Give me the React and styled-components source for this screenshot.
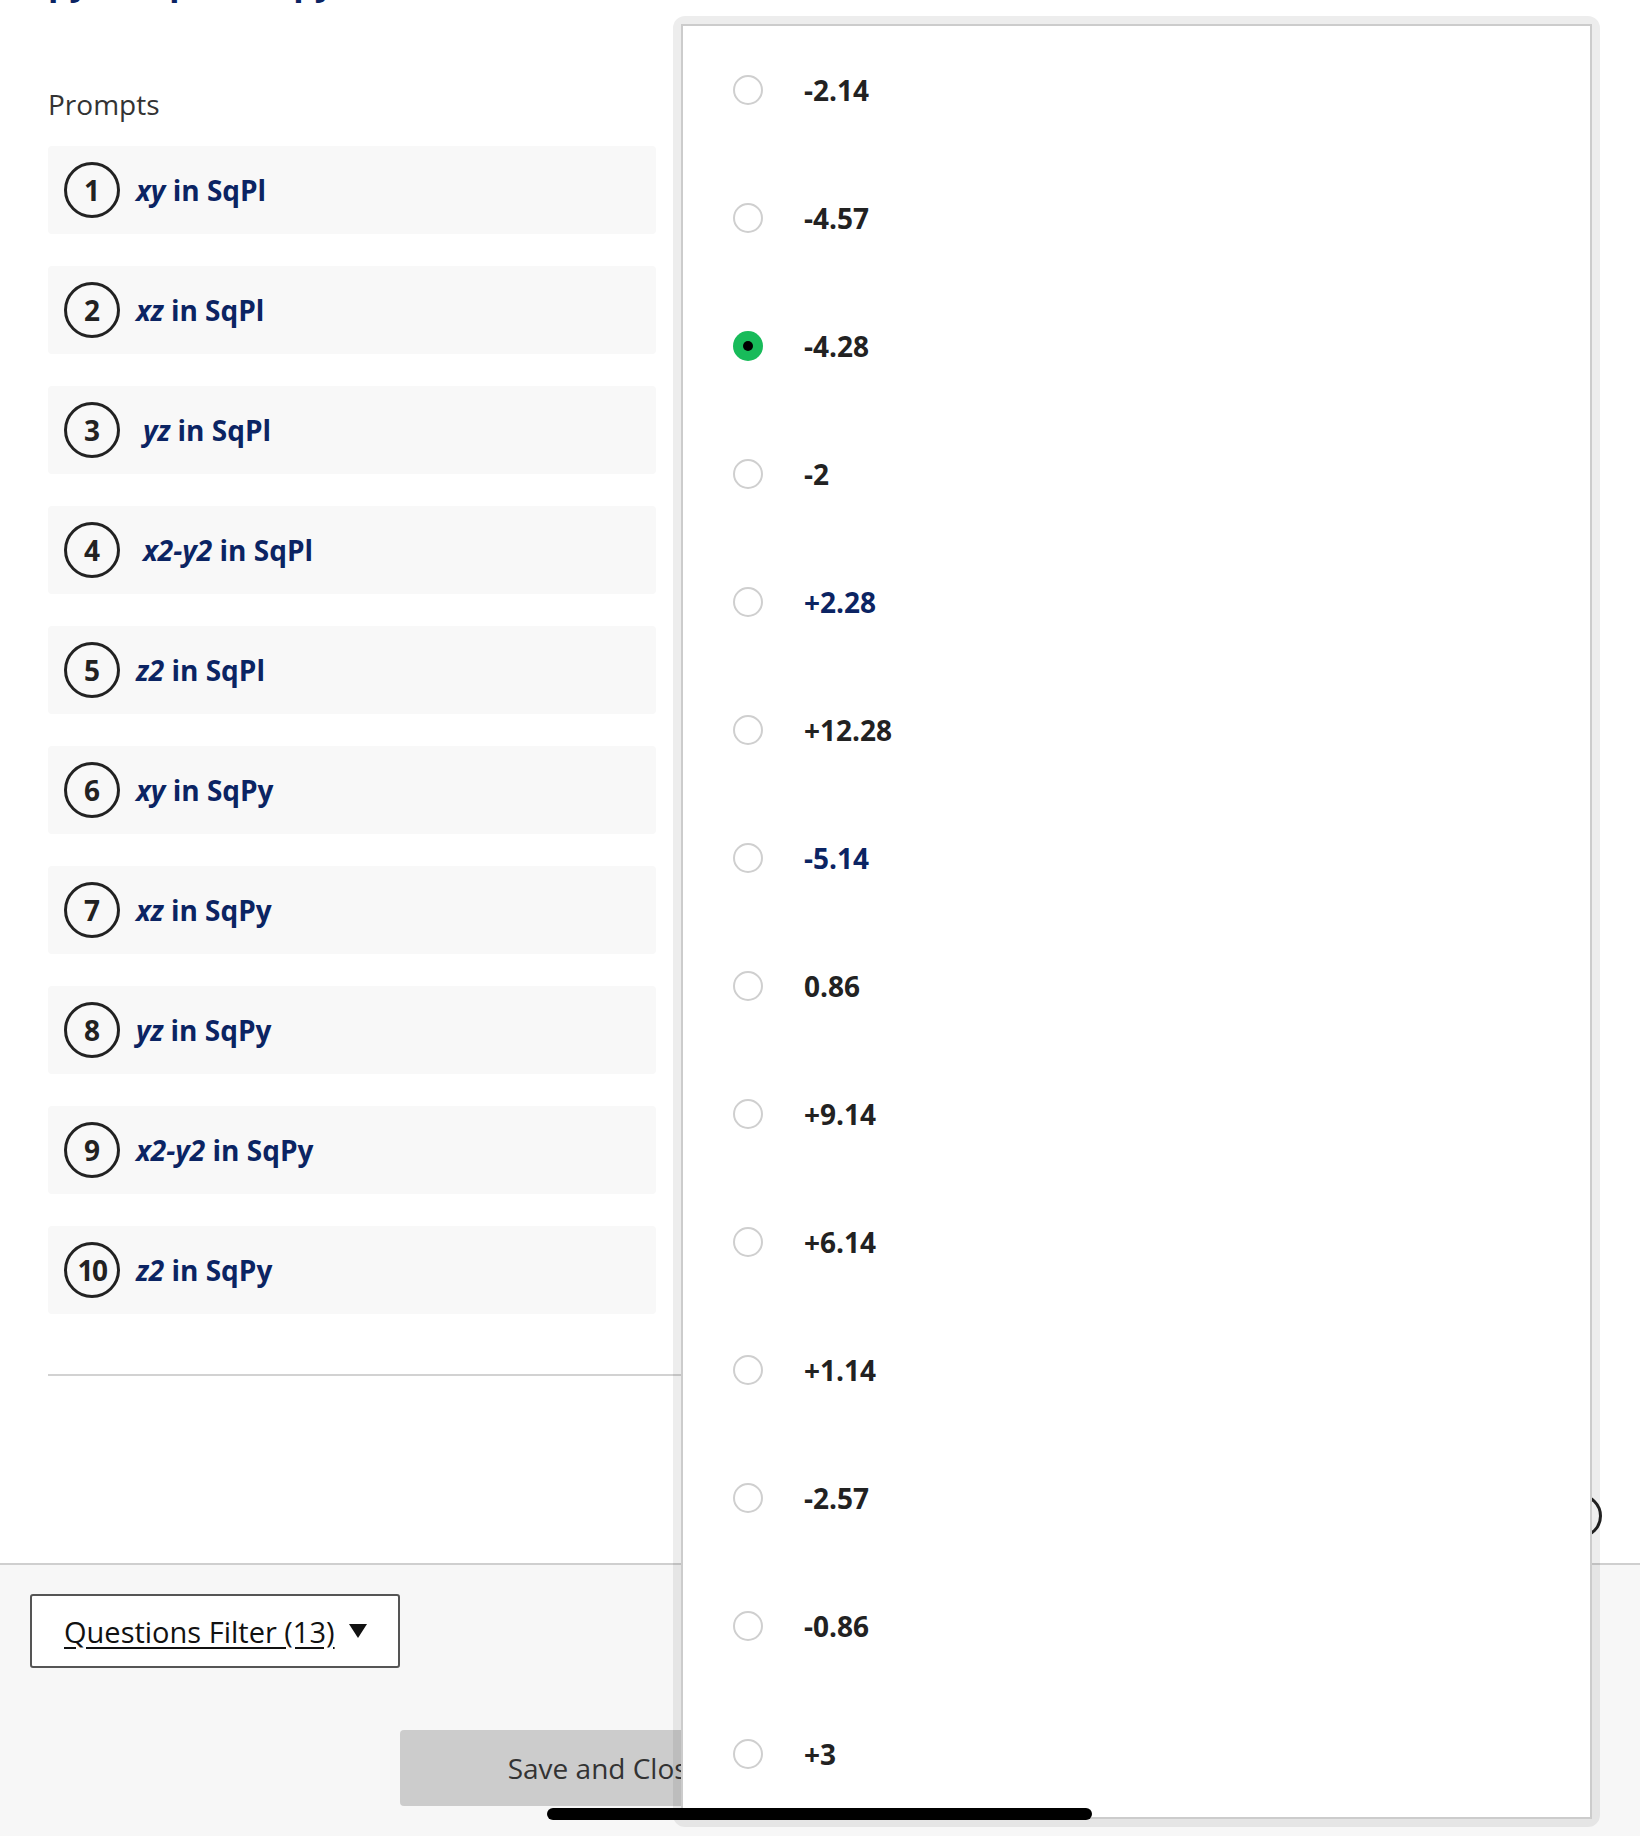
import React from 'react';
import styled, { createGlobalStyle } from 'styled-components';

const GlobalStyle = createGlobalStyle`
  html, body {
    margin: 0;
    padding: 0;
    background: #fff;
    font-family: "Open Sans", "Liberation Sans", sans-serif;
  }
`;

const NAVY = '#0b2463';

const prompts = [
  { n: 1, v: 'xy', rest: ' in SqPl' },
  { n: 2, v: 'xz', rest: ' in SqPl' },
  { n: 3, v: 'yz', rest: ' in SqPl', indent: true },
  { n: 4, v: 'x2-y2', rest: ' in SqPl', indent: true },
  { n: 5, v: 'z2', rest: ' in SqPl' },
  { n: 6, v: 'xy', rest: ' in SqPy' },
  { n: 7, v: 'xz', rest: ' in SqPy' },
  { n: 8, v: 'yz', rest: ' in SqPy' },
  { n: 9, v: 'x2-y2', rest: ' in SqPy' },
  { n: 10, v: 'z2', rest: ' in SqPy' },
];

const options = [
  { label: '-2.14' },
  { label: '-4.57' },
  { label: '-4.28', checked: true },
  { label: '-2' },
  { label: '+2.28', navy: true },
  { label: '+12.28' },
  { label: '-5.14', navy: true },
  { label: '0.86' },
  { label: '+9.14' },
  { label: '+6.14' },
  { label: '+1.14' },
  { label: '-2.57' },
  { label: '-0.86' },
  { label: '+3' },
];

const Page = styled.div`
  position: relative;
  width: 1640px;
  height: 1836px;
  overflow: hidden;
  display: flex;
  flex-direction: column;
  background: #fff;
`;

const Main = styled.main`
  flex: 0 0 1563px;
  box-sizing: border-box;
  padding-left: 48px;
  display: flex;
  flex-direction: column;
`;

// title of the question above, scrolled almost out of view
const CutTitle = styled.h2`
  margin: -40px 0 0;
  font-size: 34px;
  line-height: 44px;
  font-weight: 700;
  color: ${NAVY};
  white-space: nowrap;
`;

const SectionLabel = styled.div`
  margin-top: 82px;
  font-size: 28px;
  line-height: 36px;
  color: #333;
`;

const PromptList = styled.ul`
  list-style: none;
  margin: 24px 0 0;
  padding: 0;
  width: 608px;
  display: flex;
  flex-direction: column;
  gap: 32px;
`;

const PromptRow = styled.li`
  height: 88px;
  box-sizing: border-box;
  padding-left: 16px;
  background: #f8f8f8;
  border-radius: 4px;
  display: flex;
  align-items: center;
  gap: 16px;
`;

const NumberBadge = styled.span`
  width: 56px;
  height: 56px;
  box-sizing: border-box;
  border: 3.5px solid #222;
  border-radius: 50%;
  display: flex;
  align-items: center;
  justify-content: center;
  font-size: 28px;
  font-weight: 700;
  color: #222;
  letter-spacing: ${(p) => (p.wide ? '-1.5px' : '0')};
`;

const PromptText = styled.span`
  margin-left: ${(p) => (p.indent ? '7px' : '0')};
  font-size: 28px;
  font-weight: 700;
  color: ${NAVY};
  white-space: pre;
  em {
    font-style: italic;
  }
`;

const Divider = styled.hr`
  margin: 60px 0 0;
  width: 1544px;
  height: 2px;
  border: 0;
  background: #d2d2d2;
`;

const HelpRow = styled.div`
  margin-top: 118px;
  display: flex;
  justify-content: flex-end;
  padding-right: 38px;
`;

const HelpCircle = styled.span`
  width: 44px;
  height: 44px;
  box-sizing: border-box;
  border: 3px solid #222;
  border-radius: 50%;
`;

const Footer = styled.footer`
  flex: 1;
  background: #f7f7f7;
  border-top: 2px solid #cfcfcf;
  box-sizing: border-box;
  padding: 29px 30px 0;
  display: flex;
  flex-direction: column;
  align-items: flex-start;
`;

const FilterButton = styled.button`
  width: 370px;
  height: 74px;
  box-sizing: border-box;
  border: 2px solid #555;
  border-radius: 3px;
  background: #fff;
  padding: 0 0 0 32px;
  display: flex;
  align-items: center;
  gap: 14px;
  font-family: inherit;
  font-size: 29px;
  color: #111;
  span {
    text-decoration: underline;
    text-underline-offset: 4px;
  }
`;

const Caret = styled.i`
  width: 0;
  height: 0;
  border-left: 9px solid transparent;
  border-right: 9px solid transparent;
  border-top: 14px solid #111;
`;

const SaveButton = styled.button`
  margin: 62px 0 0 370px;
  width: 411px;
  height: 76px;
  border: 0;
  border-radius: 4px;
  background: #cccccc;
  font-family: inherit;
  font-size: 28px;
  color: #333;
`;

const Dropdown = styled.div`
  position: absolute;
  left: 673px;
  top: 16px;
  width: 927px;
  height: 1811px;
  box-sizing: border-box;
  border: 8px solid rgba(0, 0, 0, 0.07);
  border-radius: 12px;
  background-clip: padding-box;
`;

const OptionList = styled.ul`
  list-style: none;
  margin: 0;
  padding: 0;
  height: 100%;
  box-sizing: border-box;
  background: #fff;
  border: 2px solid #cccccc;
`;

const Option = styled.li`
  height: 128px;
  padding-left: 50px;
  display: flex;
  align-items: center;
  gap: 41px;
`;

const Radio = styled.span`
  width: 30px;
  height: 30px;
  box-sizing: border-box;
  border-radius: 50%;
  border: ${(p) => (p.checked ? '0' : '2px solid #cfcfcf')};
  background: ${(p) => (p.checked ? '#18bb5a' : '#fff')};
  display: flex;
  align-items: center;
  justify-content: center;
  &::after {
    content: '';
    display: ${(p) => (p.checked ? 'block' : 'none')};
    width: 10px;
    height: 10px;
    border-radius: 50%;
    background: #000;
  }
`;

const OptionLabel = styled.span`
  font-size: 28px;
  font-weight: 700;
  color: ${(p) => (p.navy ? NAVY : '#222')};
`;

const HomeIndicator = styled.div`
  position: absolute;
  left: 547px;
  top: 1808px;
  width: 545px;
  height: 12px;
  border-radius: 6px;
  background: #000;
`;

export default function App() {
  return (
    <>
      <GlobalStyle />
      <Page>
        <Main>
          <CutTitle>py in SqPl and py</CutTitle>
          <SectionLabel>Prompts</SectionLabel>
          <PromptList>
            {prompts.map((p) => (
              <PromptRow key={p.n}>
                <NumberBadge wide={p.n > 9}>{p.n}</NumberBadge>
                <PromptText indent={p.indent}>
                  <em>{p.v}</em>
                  {p.rest}
                </PromptText>
              </PromptRow>
            ))}
          </PromptList>
          <Divider />
          <HelpRow>
            <HelpCircle />
          </HelpRow>
        </Main>
        <Footer>
          <FilterButton>
            <span>Questions Filter (13)</span>
            <Caret />
          </FilterButton>
          <SaveButton>Save and Close</SaveButton>
        </Footer>
        <Dropdown>
          <OptionList>
            {options.map((o) => (
              <Option key={o.label}>
                <Radio checked={o.checked} />
                <OptionLabel navy={o.navy}>{o.label}</OptionLabel>
              </Option>
            ))}
          </OptionList>
        </Dropdown>
        <HomeIndicator />
      </Page>
    </>
  );
}
